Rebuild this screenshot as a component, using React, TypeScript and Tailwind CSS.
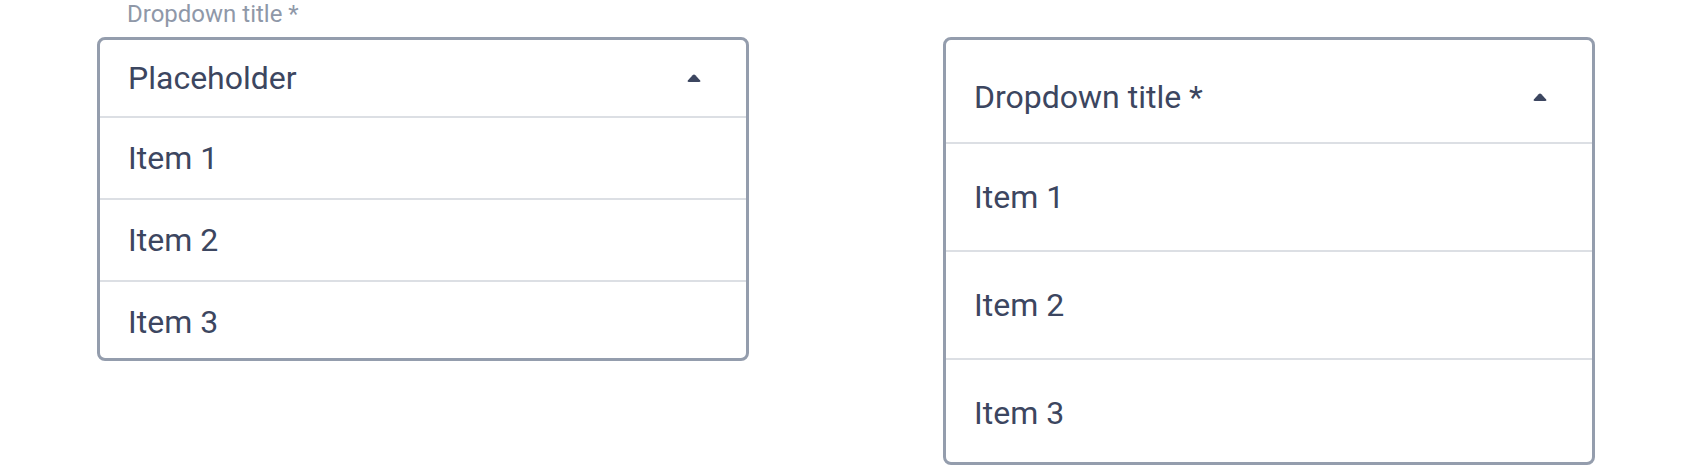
import React from "react";

interface DropdownProps {
  title: string;
  items: string[];
  boxHeight: string;
  headerHeight: string;
  rowHeight: string;
}

const Caret = () => (
  <svg width="14" height="9" viewBox="0 0 14 9" className="shrink-0">
    <path
      d="M5.6 1.2 Q7 -0.2 8.4 1.2 L13 6.2 Q14.2 8 12 8 L2 8 Q-0.2 8 1 6.2 Z"
      fill="#3c4660"
    />
  </svg>
);

const Dropdown = ({ title, items, boxHeight, headerHeight, rowHeight }: DropdownProps) => {
  return (
    <div
      className={`w-[652px] ${boxHeight} overflow-hidden rounded-[8px] border-[3px] border-[#949dad] bg-white`}
    >
      <div
        className={`flex ${headerHeight} items-center justify-between pl-[28px] pr-[45px] text-[32px] text-[#3c4660]`}
      >
        <span>{title}</span>
        <Caret />
      </div>
      {items.map((item) => (
        <div
          key={item}
          className={`flex ${rowHeight} shrink-0 items-center border-t-2 border-[#dcdfe4] pl-[28px] text-[32px] text-[#3c4660]`}
        >
          {item}
        </div>
      ))}
    </div>
  );
};

export default function App() {
  const items = ["Item 1", "Item 2", "Item 3"];

  return (
    <div
      className="flex h-[468px] w-[1692px] items-start gap-[194px] bg-white pl-[97px]"
      style={{ fontFamily: "Roboto, 'Noto Sans', sans-serif" }}
    >
      {/* label above */}
      <div className="flex flex-col">
        <span className="h-[37px] pl-[30px] text-[24px] leading-[28px] text-[#8f98a8]">
          Dropdown title *
        </span>
        <Dropdown
          title="Placeholder"
          items={items}
          boxHeight="h-[324px]"
          headerHeight="h-[76px]"
          rowHeight="h-[82px]"
        />
      </div>

      {/* title inside */}
      <div className="pt-[37px]">
        <Dropdown
          title="Dropdown title *"
          items={items}
          boxHeight="h-[428px]"
          headerHeight="h-[102px] pt-[12px]"
          rowHeight="h-[108px]"
        />
      </div>
    </div>
  );
}
